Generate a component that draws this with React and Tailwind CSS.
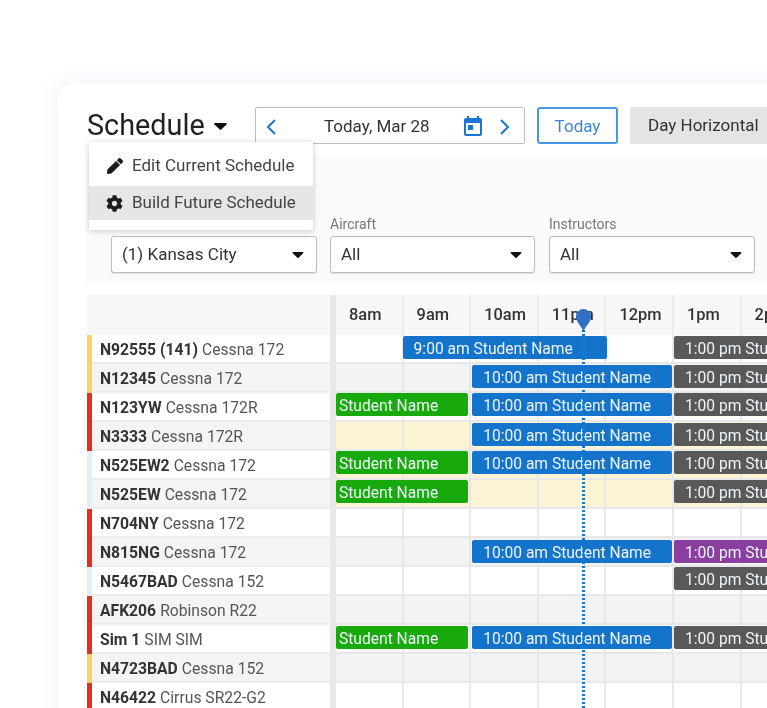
import { FaPen, FaCog } from 'react-icons/fa';
import { MdToday } from 'react-icons/md';

const hours = ['8am', '9am', '10am', '11pm', '12pm', '1pm', '2pm'];

const BLUE = 'bg-[#1474cc]';
const GRAY = 'bg-[#595959]';
const GREEN = 'bg-[#18a90c]';
const PURPLE = 'bg-[#8a3ea0]';

const green = { cls: `col-start-1 col-span-2 mr-[3px] ${GREEN} pl-[3px]`, label: 'Student Name' };
const blue = { cls: `col-start-3 col-span-3 ml-[1px] mr-[2px] ${BLUE} pl-[11px]`, label: '10:00 am Student Name' };
const gray = { cls: `col-start-6 col-span-3 ${GRAY} pl-[11px]`, label: '1:00 pm Student Name' };
const purple = { cls: `col-start-6 col-span-3 ${PURPLE} pl-[11px]`, label: '1:00 pm Student Name' };
const nine = { cls: `col-start-2 col-span-3 ml-[-1px] mr-[-1px] ${BLUE} pl-[11px]`, label: '9:00 am Student Name' };

const YELLOW = 'bg-[#fbd25e]';
const RED = 'bg-[#e2301f]';
const LIGHT = 'bg-[#e3eefb]';

const rows = [
  { id: 'N92555 (141)', model: 'Cessna 172', strip: YELLOW, off: 'mt-[1px]', bars: [nine, gray] },
  { id: 'N12345', model: 'Cessna 172', strip: YELLOW, off: 'mt-[1px]', bars: [blue, gray] },
  { id: 'N123YW', model: 'Cessna 172R', strip: RED, off: 'mt-0', bars: [green, blue, gray] },
  { id: 'N3333', model: 'Cessna 172R', strip: RED, off: 'mt-[1px]', cream: true, bars: [blue, gray] },
  { id: 'N525EW2', model: 'Cessna 172', strip: LIGHT, off: 'mt-0', cream: true, bars: [green, blue, gray] },
  { id: 'N525EW', model: 'Cessna 172', strip: LIGHT, off: 'mt-0', cream: true, bars: [green, gray] },
  { id: 'N704NY', model: 'Cessna 172', strip: RED, off: 'mt-0', bars: [] },
  { id: 'N815NG', model: 'Cessna 172', strip: RED, off: 'mt-[2px]', bars: [blue, purple] },
  { id: 'N5467BAD', model: 'Cessna 152', strip: LIGHT, off: 'mt-0', bars: [gray] },
  { id: 'AFK206', model: 'Robinson R22', strip: RED, off: 'mt-0', bars: [] },
  { id: 'Sim 1', model: 'SIM SIM', strip: RED, off: 'mt-[1px]', bars: [green, blue, gray] },
  { id: 'N4723BAD', model: 'Cessna 152', strip: YELLOW, off: 'mt-0', bars: [] },
  { id: 'N46422', model: 'Cirrus SR22-G2', strip: RED, off: 'mt-0', bars: [] },
];

const cellStarts = [
  'col-start-1',
  'col-start-2',
  'col-start-3',
  'col-start-4',
  'col-start-5',
  'col-start-6',
  'col-start-7',
  'col-start-8',
];

function Caret({ className = 'w-[13px] h-[7px]' }) {
  return (
    <svg viewBox="0 0 13 7" className={className}>
      <path d="M1 0h11c.8 0 1.2.9.6 1.5L7.2 6.6c-.4.4-1 .4-1.4 0L.4 1.5C-.2.9.2 0 1 0z" fill="#111" />
    </svg>
  );
}

function Chevron({ d, className }) {
  return (
    <svg viewBox="0 0 10 16" className={`w-[10px] h-[16px] shrink-0 ${className}`}>
      <path d={d} fill="none" stroke="#1976d2" strokeWidth="2" />
    </svg>
  );
}

function Select({ label, value, className }) {
  return (
    <div className={className}>
      <div className="text-[14px] leading-[16px] text-[#777] mb-[4px]">{label}</div>
      <div className="h-[37px] bg-white border border-[#bdbdbd] rounded-[3px] shadow-[0_1px_1px_rgba(0,0,0,0.1)] flex items-center justify-between pl-[10px] pr-[12px] text-[17px] text-[#333]">
        <span>{value}</span>
        <Caret className="w-[12px] h-[6px]" />
      </div>
    </div>
  );
}

function Row({ row, index }) {
  const alt = index % 2 === 1;
  return (
    <div className="flex h-[29px]">
      <div className={`w-[5px] shrink-0 ${row.strip}`} />
      <div
        className={`w-[238px] shrink-0 pl-[8px] pt-[2px] flex items-center text-[15.7px] whitespace-nowrap text-[#555] border-b-2 border-[#ececec] ${alt ? 'bg-[#f4f4f4]' : 'bg-white'}`}
      >
        <span className="font-bold text-[#333] mr-[4px]">{row.id}</span>
        {row.model}
      </div>
      <div className="w-[6px] shrink-0 bg-[#e8e8e8]" />
      <div className="grid grid-cols-[repeat(8,67.6px)] grid-rows-[29px]">
        {cellStarts.map((start) => (
          <div
            key={start}
            className={`${start} row-start-1 border-r-2 border-b-2 border-[#e8e8e8] ${row.cream ? 'bg-[#fdf3d5]' : alt ? 'bg-[#f3f3f3]' : 'bg-white'}`}
          />
        ))}
        {row.bars.map((bar) => (
          <div
            key={bar.label + bar.cls}
            className={`${bar.cls} ${row.off} row-start-1 self-start z-10 h-[23px] rounded-[2px] text-[#eef5fb] text-[15.6px] leading-[27px] whitespace-nowrap overflow-hidden`}
          >
            {bar.label}
          </div>
        ))}
      </div>
    </div>
  );
}

export default function App() {
  return (
    <div
      className="relative w-[767px] h-[708px] overflow-hidden bg-white pt-[83px] pl-[58px] blur-[0.3px]"
      style={{ fontFamily: 'Roboto, sans-serif' }}
    >
      <div className="relative w-[760px] h-[700px] rounded-tl-[16px] bg-white shadow-[0_0_22px_rgba(70,90,220,0.09)] pl-[28px] pt-[24px]">
        <div className="flex items-center h-[37px]">
          <div className="w-[169px] flex items-center text-[28.8px] leading-[36px] text-[#222] pl-[1px] pb-[2px]">
            Schedule
            <Caret className="w-[13px] h-[7px] ml-[9px] mt-[3px]" />
          </div>
          <div className="w-[270px] h-[37px] border border-[#bdbdbd] rounded-[2px] flex items-center pl-[10px] text-[17px] text-[#333]">
            <Chevron d="M9 1L2 8l7 7" className="mt-[2px]" />
            <span className="ml-[48px] mt-[2px] whitespace-nowrap">Today, Mar 28</span>
            <MdToday className="ml-[31px] w-[24px] h-[24px] shrink-0 mt-[2px] text-[#1976d2]" />
            <Chevron d="M1 1l7 7-7 7" className="ml-[15px] mt-[2px]" />
          </div>
          <div className="ml-[12px] w-[81px] h-[37px] border-2 border-[#4a98e2] rounded-[3px] flex items-center justify-center text-[17px] text-[#3b87d6] pt-[2px]">
            Today
          </div>
          <div className="ml-[12px] w-[160px] shrink-0 h-[37px] bg-[#e4e4e4] rounded-[2px] flex items-center pl-[18px] pt-[1px] text-[17px] text-[#333] whitespace-nowrap">
            Day Horizontal
          </div>
        </div>

        <div className="mt-[13px] h-[126px] bg-[#fafafa] pl-[25px] pt-[59px] flex">
          <Select label="Location" value="(1) Kansas City" className="w-[206px]" />
          <Select label="Aircraft" value="All" className="w-[205px] ml-[13px]" />
          <Select label="Instructors" value="All" className="w-[206px] ml-[14px]" />
        </div>

        <div className="absolute left-[31px] top-[59px] w-[224px] h-[88px] bg-white shadow-[0_1px_6px_rgba(0,0,0,0.2)] z-30 text-[17px] text-[#444]">
          <div className="h-[44px] flex items-center pl-[18px] pt-[3px]">
            <FaPen className="w-[16px] h-[16px] text-[#1c1c1c]" />
            <span className="ml-[9px]">Edit Current Schedule</span>
          </div>
          <div className="h-[34px] bg-[#e6e6e6] flex items-center pl-[17px]">
            <FaCog className="w-[17px] h-[17px] text-[#1c1c1c]" />
            <span className="ml-[9px]">Build Future Schedule</span>
          </div>
        </div>

        <div className="mt-[12px] ml-[1px]">
          <div className="flex h-[40px]">
            <div className="w-[243px] shrink-0 bg-[#f7f7f7]" />
            <div className="w-[6px] shrink-0 bg-[#e8e8e8]" />
            <div className="flex bg-[#f7f7f7]">
              {hours.map((h) => (
                <div
                  key={h}
                  className="w-[67.6px] shrink-0 pl-[13px] flex items-center border-r-2 border-[#ececec] text-[16.4px] font-medium text-[#333]"
                >
                  {h}
                </div>
              ))}
            </div>
          </div>
          {rows.map((row, i) => (
            <Row key={row.id} row={row} index={i} />
          ))}
        </div>

        {/* now marker */}
        <div className="absolute left-[524px] top-[247px] bottom-0 w-[3px] bg-[linear-gradient(#1976d2_50%,transparent_50%)] bg-[length:3px_4px] z-20" />
        <svg viewBox="0 0 16 22" className="absolute left-[517px] top-[226px] w-[17px] h-[22px] z-20">
          <path d="M8 22C5 16 .5 13 .5 7.5a7.5 7.5 0 0 1 15 0C15.500 13 11 16 8 22z" fill="#2f6fc4" />
        </svg>
      </div>
    </div>
  );
}
